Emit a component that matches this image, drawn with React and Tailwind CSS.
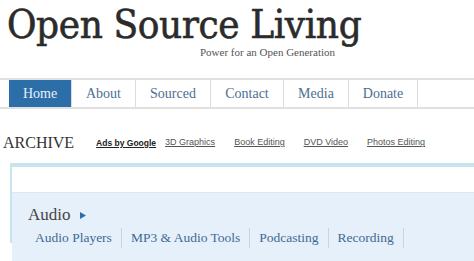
const tabs = [
  { label: 'Home', w: 'w-[63px]', active: true },
  { label: 'About', w: 'w-[64px]' },
  { label: 'Sourced', w: 'w-[75px]' },
  { label: 'Contact', w: 'w-[73px]' },
  { label: 'Media', w: 'w-[65px]' },
  { label: 'Donate', w: 'w-[69px]' },
];

const ads = ['3D Graphics', 'Book Editing', 'DVD Video', 'Photos Editing'];

const audioLinks = ['Audio Players', 'MP3 & Audio Tools', 'Podcasting', 'Recording'];

function App() {
  return (
    <div className="w-[474px] h-[261px] bg-white overflow-hidden">
      {/* Header */}
      <div className="h-[78px] pl-[7px] pt-[2px]">
        <h1 className="font-['DejaVu_Serif_Condensed','DejaVu_Serif',serif] text-[40px] leading-[44px] text-[#2b2b2b] tracking-[-0.4px] whitespace-nowrap [-webkit-text-stroke:0.6px_#2b2b2b]">
          Open Source Living
        </h1>
        <p className="ml-[193px] font-['Liberation_Serif',serif] text-[11px] leading-[13px] text-[#555] whitespace-nowrap">
          Power for an Open Generation
        </p>
      </div>

      {/* Nav */}
      <div className="h-[31px] border-y-2 border-[#e0e0e0] pl-[9px] flex">
        {tabs.map((t) => (
          <div
            key={t.label}
            className={`${t.w} flex items-center justify-center border-r border-[#dcdcdc] font-['Liberation_Serif',serif] text-[14px] ${
              t.active ? 'bg-[#2b6ea8] text-[#e8f0f8]' : 'text-[#4c6f90]'
            }`}
          >
            {t.label}
          </div>
        ))}
      </div>

      {/* Archive row */}
      <div className="h-[54px] flex items-center pl-[3px] pt-[14px]">
        <span className="font-['Liberation_Serif',serif] text-[16px] text-[#333] mr-[22px]">ARCHIVE</span>
        <span className="font-['Liberation_Sans',sans-serif] text-[8.5px] font-bold text-[#222] underline mr-[9px]">
          Ads by Google
        </span>
        <div className="flex gap-[19px]">
          {ads.map((a) => (
            <span key={a} className="font-['Liberation_Sans',sans-serif] text-[9px] text-[#555] underline">
              {a}
            </span>
          ))}
        </div>
      </div>

      {/* Category box */}
      <div className="ml-[10px] border-t-4 border-l-2 border-[#c6e6ee] h-[80px]">
        <div className="h-[26px] bg-white border-b border-[#dbe9f5]" />
        <div className="bg-[#e6f0fb] h-full pl-[16px] pt-[12px]">
          <div className="flex items-center gap-[9px]">
            <span className="font-['Liberation_Serif',serif] text-[17px] leading-[20px] text-[#444]">Audio</span>
            <svg width="6" height="7" viewBox="0 0 6 7" className="mt-[1px]">
              <path d="M0 0 L6 3.5 L0 7 Z" fill="#2b6ea8" />
            </svg>
          </div>
          <div className="flex mt-[3px] ml-[7px]">
            {audioLinks.map((l) => (
              <span
                key={l}
                className="font-['Liberation_Serif',serif] text-[13.5px] leading-[20px] text-[#3e6a92] px-[9px] first:pl-0 border-r border-[#c8d4e0]"
              >
                {l}
              </span>
            ))}
          </div>
        </div>
      </div>
    </div>
  );
}

export default App;
